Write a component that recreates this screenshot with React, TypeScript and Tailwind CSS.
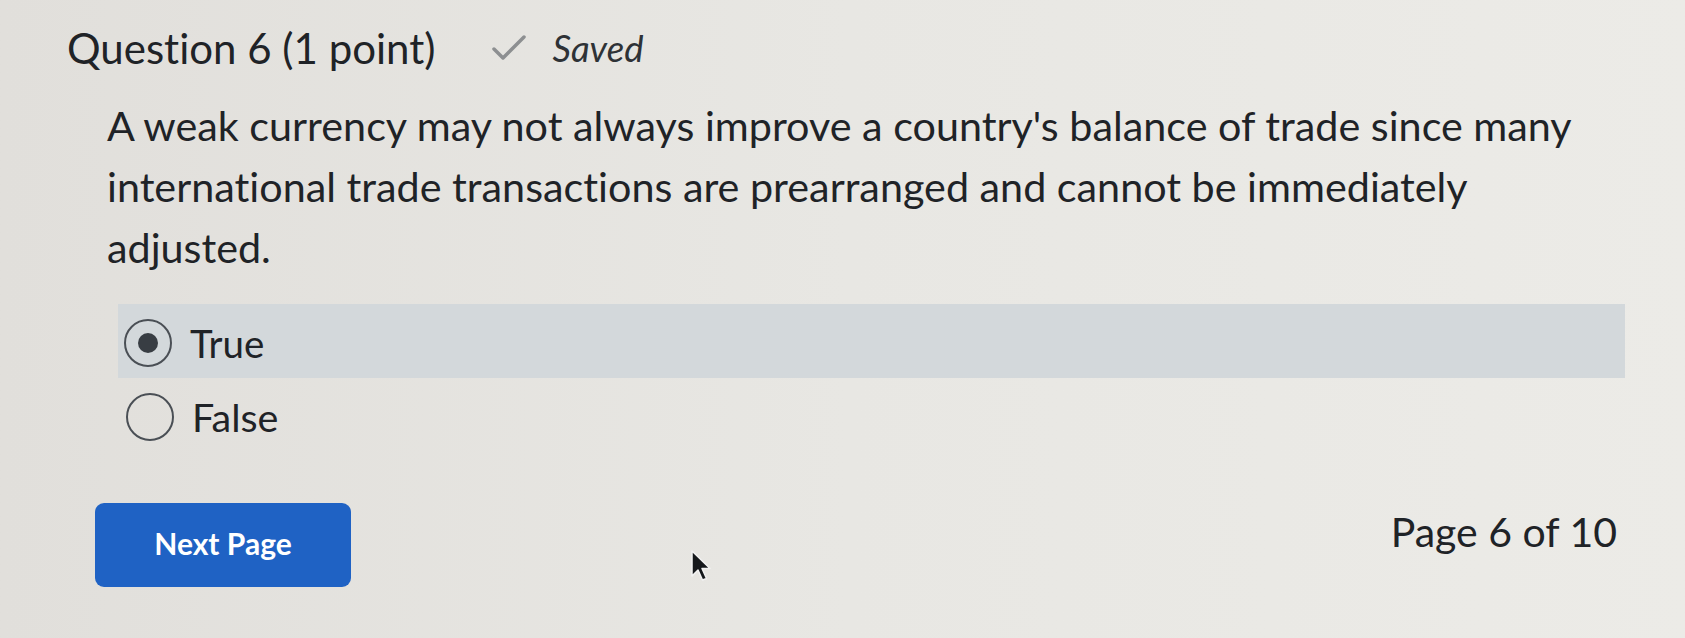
import React from "react";

function Radio({ checked }: { checked?: boolean }) {
    return (
        <span className="flex h-[48px] w-[48px] shrink-0 items-center justify-center rounded-full border-[2.5px] border-[#4a4f55]">
            {checked && <span className="h-[20px] w-[20px] rounded-full bg-[#383d43]" />}
        </span>
    );
}

function Cursor() {
    return (
        <svg className="absolute left-[690px] top-[549px]" width="24" height="34" viewBox="0 0 24 34">
            <path d="M2 2 L2 27 L8 21 L12.5 31 L16.5 29.5 L12 19.5 L20 19.5 Z" fill="#15181b" stroke="#f2f2f2" strokeWidth="1.5" strokeLinejoin="round" />
        </svg>
    );
}

export default function App() {
    return (
        <div className="relative h-[638px] w-[1685px] overflow-hidden bg-gradient-to-r from-[#e1dfdb] via-[#e8e7e3] to-[#ecebe7] font-['Lato',_'Noto_Sans',_sans-serif] text-[#1f2327] [font-variant-ligatures:none]">
            <div className="flex items-center pl-[67px] pt-[22px]">
                <h1 className="text-[42px] leading-[52px] font-normal">Question 6 (1 point)</h1>
                <svg className="ml-[55px]" width="36" height="28" viewBox="0 0 36 28">
                    <path d="M3 15 L12 24 L33 3" fill="none" stroke="#8d8f91" strokeWidth="3.5" strokeLinecap="round" strokeLinejoin="round" />
                </svg>
                <span className="ml-[26px] text-[36.5px] italic leading-[52px] text-[#2e3236]">Saved</span>
            </div>

            <p className="ml-[107px] mt-[21px] text-[41.3px] leading-[61px]">
                A weak currency may not always improve a country's balance of trade since many
                <br />
                international trade transactions are prearranged and cannot be immediately
                <br />
                adjusted.
            </p>

            <div className="ml-[118px] mt-[26px] w-[1507px]">
                <div className="flex h-[74px] items-center gap-[18px] bg-[#d3d8db] pl-[6px] pt-[4px]">
                    <Radio checked />
                    <span className="text-[38.5px] leading-none">True</span>
                </div>
                <div className="mt-[2px] flex h-[74px] items-center gap-[18px] pl-[8px]">
                    <Radio />
                    <span className="text-[39.5px] leading-none">False</span>
                </div>
            </div>

            <div className="mt-[49px] flex items-start justify-between pl-[95px] pr-[68px]">
                <button className="flex h-[84px] w-[256px] items-center justify-center rounded-[9px] bg-[#1f62c4] pb-[3px] text-[30px] font-bold text-white">
                    Next Page
                </button>
                <span className="mt-[1px] text-[41px] leading-[56px]">Page 6 of 10</span>
            </div>

            <Cursor />
        </div>
    );
}
